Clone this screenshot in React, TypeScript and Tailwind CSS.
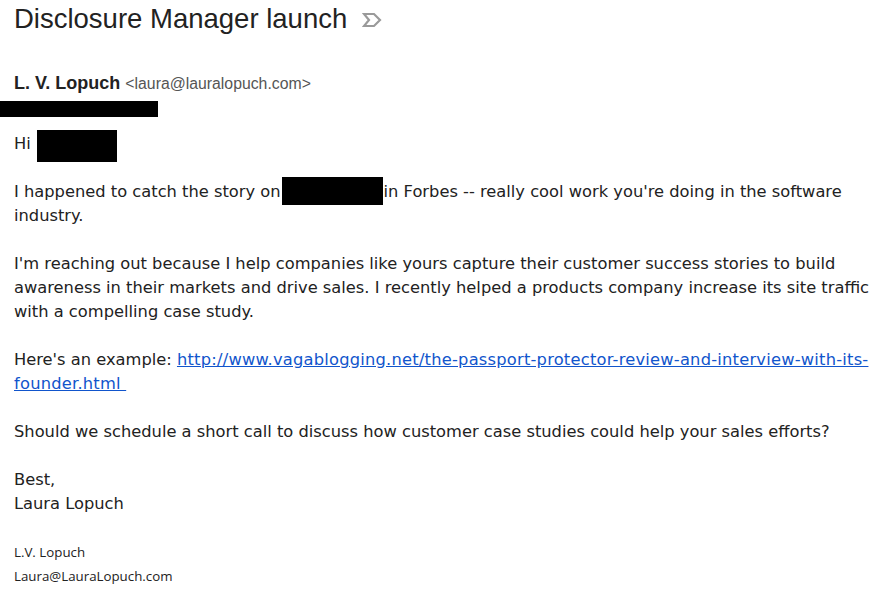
import React from "react";

const body = { fontFamily: '"DejaVu Sans", Verdana, sans-serif' };
const arial = { fontFamily: '"Liberation Sans", Arial, sans-serif' };
const sig = { fontFamily: '"Open Sans", "Noto Sans", sans-serif' };

function Important() {
  return (
    <svg width="20" height="16" viewBox="0 0 20 16" className="ml-[15px] mt-[2px]">
      <path d="M2 2 H12 L18 8 L12 14 H2 L7 8 Z" fill="none" stroke="#9a9a9a" strokeWidth="2.2" strokeLinejoin="miter" />
    </svg>
  );
}

export default function App() {
  return (
    <div className="w-[880px] h-[593px] bg-white overflow-hidden relative">
      <div className="flex items-center pl-[14px] pt-[1px] h-[36px]">
        <h1 className="text-[27.5px] leading-[32px] text-[#222222] font-normal" style={arial}>
          Disclosure Manager launch
        </h1>
        <Important />
      </div>
      <div className="pl-[14px] mt-[36px] flex items-baseline text-[#222222]" style={arial}>
        <span className="font-bold text-[18px] leading-[22px]">L. V. Lopuch</span>
        <span className="ml-[5px] text-[15.8px] text-[#555555]">&lt;laura@lauralopuch.com&gt;</span>
      </div>
      <div className="w-[158px] h-[16px] bg-black mt-[5px]" />
      <div className="pl-[14px] pt-[15px] text-[16.3px] leading-[24px] text-[#222222]" style={body}>
        <div className="whitespace-nowrap">
          Hi
          <span className="relative inline-block align-top w-[80px] h-[24px] ml-[6px]">
            <span className="absolute left-0 top-[-2px] w-[80px] h-[32px] bg-black" />
          </span>
        </div>
        <div className="mt-[24px] whitespace-nowrap">
          I happened to catch the story on
          <span className="relative inline-block align-top w-[101px] h-[24px] mx-[1px]">
            <span className="absolute left-0 top-[-3px] w-[101px] h-[28px] bg-black" />
          </span>
          in Forbes -- really cool work you're doing in the software
          <br />
          industry.
        </div>
        <div className="mt-[24px] whitespace-nowrap">
          I'm reaching out because I help companies like yours capture their customer success stories to build
          <br />
          awareness in their markets and drive sales. I recently helped a products company increase its site traffic
          <br />
          with a compelling case study.
        </div>
        <div className="mt-[24px] whitespace-nowrap">
          Here's an example:{" "}
          <a className="text-[#1155cc] underline tracking-[0.22px]" href="#">
            http://www.vagablogging.net/the-passport-protector-review-and-interview-with-its-
            <br />
            founder.html&nbsp;
          </a>
        </div>
        <div className="mt-[24px] whitespace-nowrap">
          Should we schedule a short call to discuss how customer case studies could help your sales efforts?
        </div>
        <div className="mt-[24px]">
          Best,
          <br />
          Laura Lopuch
        </div>
        <div className="mt-[24px] text-[13.3px] leading-[24px]" style={sig}>
          L.V. Lopuch
          <br />
          Laura@LauraLopuch.com
        </div>
      </div>
    </div>
  );
}
